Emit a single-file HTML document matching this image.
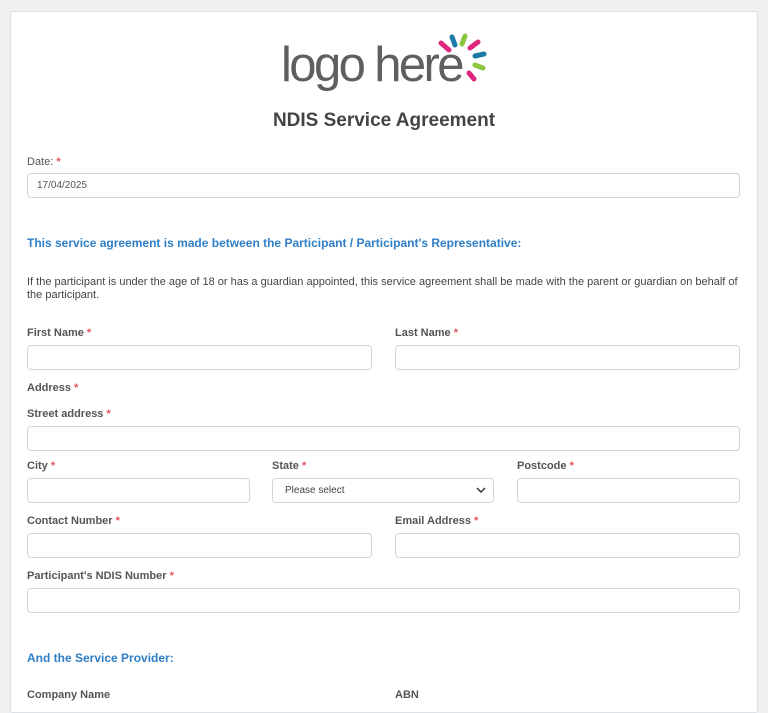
<!DOCTYPE html>
<html><head><style>
body{margin:0;width:768px;height:694px;overflow:hidden;background:#eef0f2;font-family:"Liberation Sans",sans-serif;position:relative}
.card{position:absolute;left:10px;top:11px;width:746px;height:700px;background:#fff;border:1px solid #dde1e4;border-radius:3px}
.a{position:absolute}
.l{position:absolute;font-size:11px;font-weight:bold;color:#555;}
.l b{color:#e0525a;font-weight:bold}
.i{position:absolute;border:1px solid #d2d6da;border-radius:4px;background:#fff;box-sizing:border-box;height:25px}
.h{position:absolute;color:#2f7fc7;font-weight:bold;font-size:12px}
</style></head><body>
<div class="card"></div>
<div class="a" style="left:281px;top:40px;font-size:49px;color:#5f5f5f;letter-spacing:-2.6px;line-height:50px">logo here</div>
<svg class="a" style="left:434px;top:30px" width="60" height="55" viewBox="0 0 60 55">
<g stroke-width="5" stroke-linecap="round" fill="none">
<line x1="7" y1="13" x2="15" y2="20" stroke="#e0267e"/>
<line x1="18" y1="7" x2="21" y2="15" stroke="#1a7aa8"/>
<line x1="31" y1="6" x2="28" y2="14" stroke="#8cc63f"/>
<line x1="44" y1="12" x2="36" y2="18" stroke="#e0267e"/>
<line x1="50" y1="24" x2="41" y2="26" stroke="#1a7aa8"/>
<line x1="49" y1="38" x2="41" y2="35" stroke="#8cc63f"/>
<line x1="40" y1="49" x2="35" y2="43" stroke="#e0267e"/>
</g></svg>
<div class="a" style="left:0;width:768px;text-align:center;top:110px;font-size:19px;font-weight:bold;color:#444">NDIS Service Agreement</div>
<div class="l" style="left:27px;top:156px;font-weight:normal">Date: <b>*</b></div>
<div class="i" style="left:27px;top:173px;width:713px"><span style="position:absolute;left:9px;top:6px;font-size:10px;color:#555">17/04/2025</span></div>
<div class="h" style="left:27px;top:236px">This service agreement is made between the Participant / Participant's Representative:</div>
<div class="a" style="left:27px;top:276px;width:720px;font-size:11px;color:#444;line-height:13px">If the participant is under the age of 18 or has a guardian appointed, this service agreement shall be made with the parent or guardian on behalf of the participant.</div>
<div class="l" style="left:27px;top:327px">First Name <b>*</b></div>
<div class="l" style="left:395px;top:327px">Last Name <b>*</b></div>
<div class="i" style="left:27px;top:345px;width:345px"></div>
<div class="i" style="left:395px;top:345px;width:345px"></div>
<div class="l" style="left:27px;top:382px">Address <b>*</b></div>
<div class="l" style="left:27px;top:408px">Street address <b>*</b></div>
<div class="i" style="left:27px;top:426px;width:713px"></div>
<div class="l" style="left:27px;top:460px">City <b>*</b></div>
<div class="l" style="left:272px;top:460px">State <b>*</b></div>
<div class="l" style="left:517px;top:460px">Postcode <b>*</b></div>
<div class="i" style="left:27px;top:478px;width:223px"></div>
<div class="i" style="left:272px;top:478px;width:222px"><span style="position:absolute;left:12px;top:6px;font-size:10px;color:#444">Please select</span>
<svg style="position:absolute;right:7px;top:8px" width="10" height="7" viewBox="0 0 10 7"><path d="M1 1l4 4 4-4" stroke="#333" stroke-width="1.5" fill="none"/></svg></div>
<div class="i" style="left:517px;top:478px;width:223px"></div>
<div class="l" style="left:27px;top:515px">Contact Number <b>*</b></div>
<div class="l" style="left:395px;top:515px">Email Address <b>*</b></div>
<div class="i" style="left:27px;top:533px;width:345px"></div>
<div class="i" style="left:395px;top:533px;width:345px"></div>
<div class="l" style="left:27px;top:570px">Participant's NDIS Number <b>*</b></div>
<div class="i" style="left:27px;top:588px;width:713px"></div>
<div class="h" style="left:27px;top:651px">And the Service Provider:</div>
<div class="l" style="left:27px;top:689px">Company Name</div>
<div class="l" style="left:395px;top:689px">ABN</div>
</body></html>
